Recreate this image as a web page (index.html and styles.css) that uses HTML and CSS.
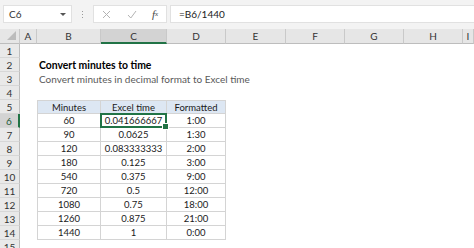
FILE: index.html
```html
<html lang="en">
<head>
    <meta charset="UTF-8">
    <meta name="viewport" content="width=device-width, initial-scale=1.0">
    <title>Convert minutes to time</title>
    <link rel="stylesheet" href="styles.css">
</head>
<body>
    <div class="formula-bar">
        <div class="name-box">
            <span>C6</span>
            <span class="caret"></span>
        </div>
        <div class="grip"><i></i><i></i><i></i></div>
        <div class="fx-tools">
            <span class="tool">
                <svg width="9" height="9" viewBox="0 0 9 9"><path d="M1 1L8 8M8 1L1 8" stroke="#b3b3b3" stroke-width="1" fill="none"/></svg>
            </span>
            <span class="tool">
                <svg width="10" height="9" viewBox="0 0 10 9"><path d="M1 5L3.8 8L9 1" stroke="#b3b3b3" stroke-width="1" fill="none"/></svg>
            </span>
            <span class="tool fx"><i>f</i><sub>x</sub></span>
        </div>
        <div class="formula">=B6/1440</div>
    </div>

    <div class="sheet" id="sheet"></div>

    <script>
        const cols = ['A', 'B', 'C', 'D', 'E', 'F', 'G', 'H', 'I'];
        const data = [
            [60, '0.041666667', '1:00'],
            [90, '0.0625', '1:30'],
            [120, '0.083333333', '2:00'],
            [180, '0.125', '3:00'],
            [540, '0.375', '9:00'],
            [720, '0.5', '12:00'],
            [1080, '0.75', '18:00'],
            [1260, '0.875', '21:00'],
            [1440, '1', '0:00']
        ];
        const sheet = document.getElementById('sheet');

        function add(cls, text) {
            const el = document.createElement('div');
            el.className = cls;
            if (text !== undefined) el.textContent = text;
            sheet.appendChild(el);
            return el;
        }

        // Header row
        add('corner').innerHTML = '<svg width="9" height="9" viewBox="0 0 9 9"><path d="M9 0L9 9L0 9Z" fill="#bcbcbc"/></svg>';
        cols.forEach(c => add('col-head' + (c === 'C' ? ' active' : ''), c));

        // Rows
        for (let r = 1; r <= 15; r++) {
            add('row-head' + (r === 6 ? ' active' : ''), r);
            cols.forEach((c, i) => {
                let cls = 'cell';
                let text;
                if (r === 2 && c === 'B') { cls += ' title'; text = 'Convert minutes to time'; }
                if (r === 3 && c === 'B') { cls += ' subtitle'; text = 'Convert minutes in decimal format to Excel time'; }
                if (r >= 5 && r <= 14 && i >= 1 && i <= 3) {
                    cls += ' t';
                    if (i === 1) cls += ' t-first';
                    if (r === 5) { cls += ' t-head'; text = ['Minutes', 'Excel time', 'Formatted'][i - 1]; }
                    else text = data[r - 6][i - 1];
                    if (r === 6 && c === 'C') cls += ' selected';
                }
                add(cls, text);
            });
        }
    </script>
</body>
</html>
```

FILE: styles.css
```css
* {
    box-sizing: border-box;
}

body {
    margin: 0;
    background: #fff;
    font-family: Lato, 'Open Sans', sans-serif;
    font-size: 9.5px;
    color: #1a1a1a;
    overflow: hidden;
}

/* Formula bar */
.formula-bar {
    display: flex;
    height: 29px;
    padding: 5px 0 6px 3px;
    background: #f3f3f3;
}

.name-box {
    width: 69px;
    display: flex;
    align-items: center;
    justify-content: space-between;
    padding: 0 5px 0 5px;
    background: #fff;
    border: 1px solid #e1e1e1;
    font-size: 10px;
    color: #333;
}

.caret {
    width: 0;
    height: 0;
    border-left: 3px solid transparent;
    border-right: 3px solid transparent;
    border-top: 3px solid #555;
}

.grip {
    width: 21px;
    display: flex;
    flex-direction: column;
    align-items: center;
    justify-content: center;
    gap: 2px;
}

.grip i {
    width: 1px;
    height: 1px;
    background: #9a9a9a;
}

.fx-tools {
    width: 74px;
    display: flex;
    background: #fff;
    border: 1px solid #e1e1e1;
}

.tool {
    width: 25px;
    display: flex;
    align-items: center;
    justify-content: center;
}

.fx {
    width: 22px;
    color: #444;
    font-family: 'Liberation Serif', serif;
    font-size: 11px;
}

.fx sub {
    font-size: 7px;
    font-style: italic;
    vertical-align: -1px;
}

.formula {
    flex: 1;
    margin-left: 3px;
    display: flex;
    align-items: center;
    padding-left: 8px;
    background: #fff;
    border: 1px solid #e1e1e1;
    border-right: none;
    font-size: 10px;
    color: #222;
}

/* Grid */
.sheet {
    display: grid;
    grid-template-columns: 20px 17px 64px 66px 59px 60px 59px 59px 59px 1fr;
    grid-template-rows: 15px;
    grid-auto-rows: 14px;
}

.corner {
    display: flex;
    align-items: flex-end;
    justify-content: flex-end;
    padding: 0 3px 3px 0;
    background: #e6e6e6;
    border-right: 1px solid #c9c9c9;
    border-bottom: 1px solid #bdbdbd;
}

.col-head {
    display: flex;
    align-items: center;
    justify-content: center;
    background: #e6e6e6;
    border-right: 1px solid #c9c9c9;
    border-bottom: 1px solid #bdbdbd;
    font-size: 10px;
    color: #333;
}

.col-head.active {
    background: #d3d3d3;
    border-bottom: 2px solid #217346;
    color: #333;
}

.row-head {
    display: flex;
    align-items: center;
    justify-content: center;
    background: #e9e9e9;
    border-right: 1px solid #bdbdbd;
    border-bottom: 1px solid #d7d7d7;
    font-size: 10px;
    color: #333;
}

.row-head.active {
    background: #d3d3d3;
    border-right: 2px solid #217346;
    color: #1f5c3a;
}

.cell {
    display: flex;
    align-items: center;
    white-space: nowrap;
}

.title {
    padding-left: 2px;
    font-size: 10.4px;
    font-weight: 700;
    color: #000;
}

.subtitle {
    padding-left: 2px;
    font-size: 10px;
    color: #595959;
}

/* Table */
.t {
    justify-content: center;
    border-right: 1px solid #d4d4d4;
    border-bottom: 1px solid #d4d4d4;
}

.t-first {
    border-left: 1px solid #d4d4d4;
}

.t-head {
    background: #dde7f3;
    border-top: 1px solid #d4d4d4;
}

.selected {
    position: relative;
}

.selected::before {
    content: '';
    position: absolute;
    top: -1px;
    left: -1px;
    right: -1px;
    bottom: -1px;
    border: 2px solid #217346;
}

.selected::after {
    content: '';
    position: absolute;
    right: -3px;
    bottom: -3px;
    width: 5px;
    height: 5px;
    background: #217346;
    border: 1px solid #fff;
}
```
